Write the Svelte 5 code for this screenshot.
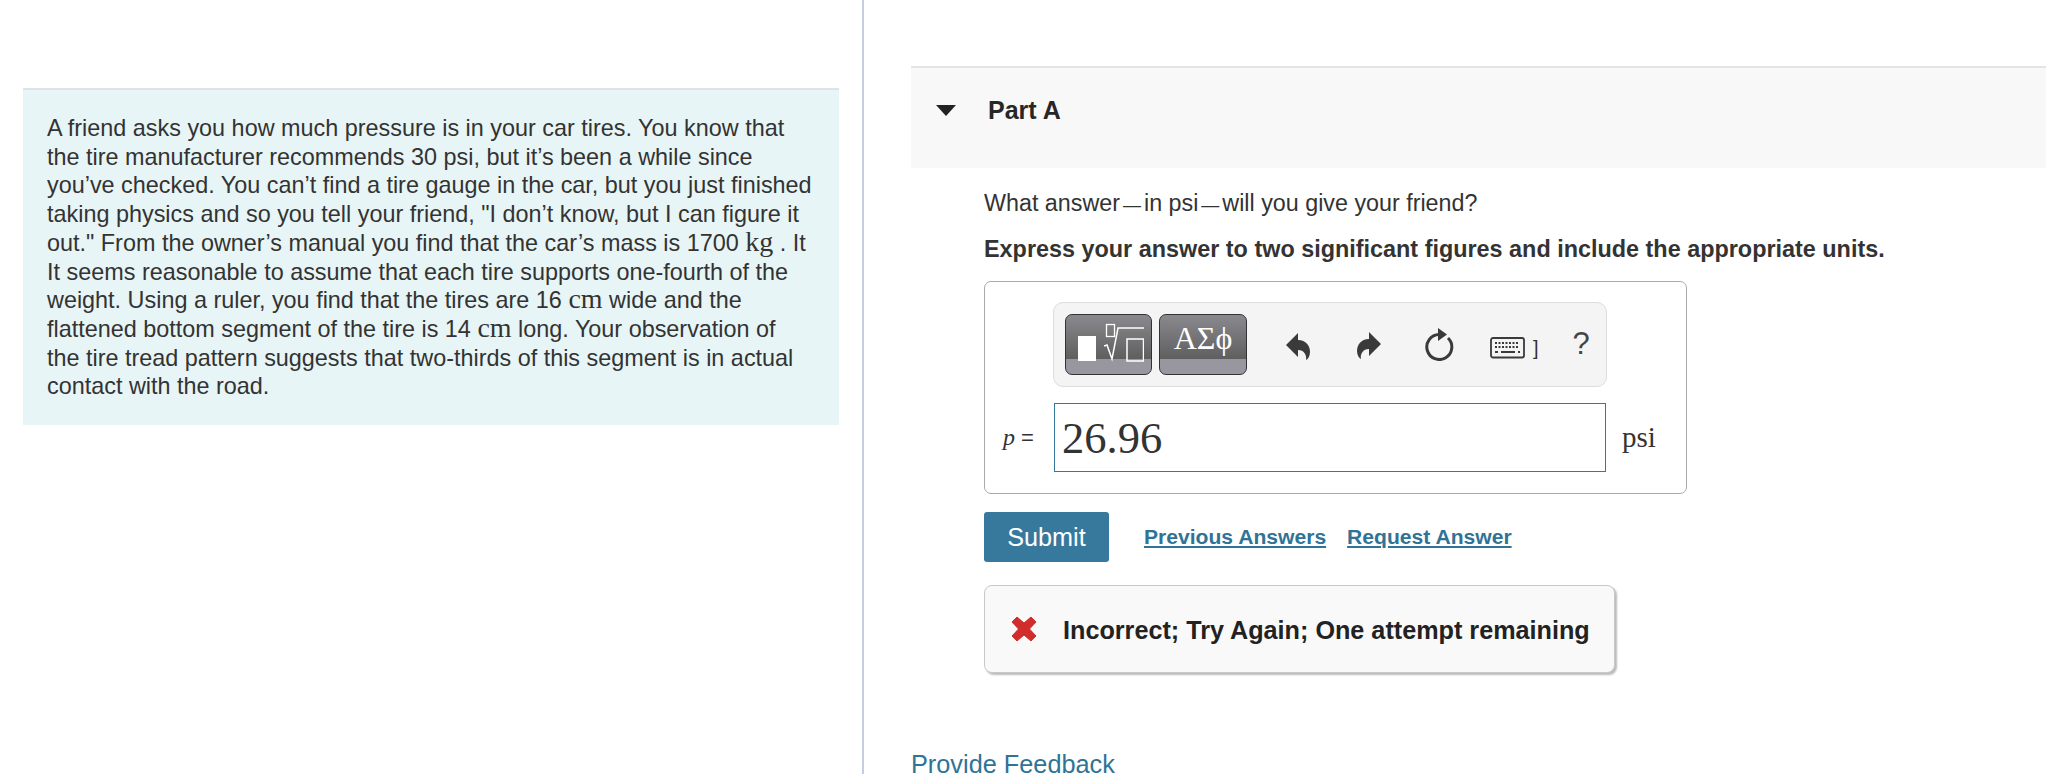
<script>
  let answer = "26.96";
</script>

<div class="page">
  <div class="left">
    <div class="intro">
      A friend asks you how much pressure is in your car tires. You know that<br />
      the tire manufacturer recommends 30 psi, but it’s been a while since<br />
      you’ve checked. You can’t find a tire gauge in the car, but you just finished<br />
      taking physics and so you tell your friend, "I don’t know, but I can figure it<br />
      out." From the owner’s manual you find that the car’s mass is 1700 <span class="unit">kg</span> . It<br />
      It seems reasonable to assume that each tire supports one-fourth of the<br />
      weight. Using a ruler, you find that the tires are 16 <span class="unit">cm</span> wide and the<br />
      flattened bottom segment of the tire is 14 <span class="unit">cm</span> long. Your observation of<br />
      the tire tread pattern suggests that two-thirds of this segment is in actual<br />
      contact with the road.
    </div>
  </div>

  <div class="right">
    <div class="part-head">
      <span class="caret"></span>
      <span class="part-title">Part A</span>
    </div>

    <div class="part-body">
      <p class="question">What answer<span class="dash">—</span>in psi<span class="dash">—</span>will you give your friend?</p>
      <p class="instructions">Express your answer to two significant figures and include the appropriate units.</p>

      <div class="answer-box">
        <div class="toolbar">
          <div class="tpl templates">
            <span class="block"></span>
            <svg width="40" height="39" viewBox="0 0 40 39" fill="none" stroke="#fff">
              <rect x="2.500" y="1.500" width="8" height="12" stroke-width="1.300" />
              <path d="M0 23l3-1 5 14 6-31h26" stroke-width="1.500" />
              <rect x="23" y="16" width="16.500" height="22" stroke-width="1.500" />
            </svg>
          </div>
          <div class="tpl symbols">ΑΣϕ</div>

          <svg class="undo" width="24" height="27" viewBox="0 0 24 27">
            <path d="M0 12L12 0v7c8 0 12 6 12 12 0 4-2 7-4 8 1-5-2-10-8-10v7z" fill="#3a3a3a" />
          </svg>
          <svg class="redo" width="24" height="27" viewBox="0 0 24 27">
            <path d="M24 12L12 0v7C4 7 0 13 0 19c0 4 2 7 4 8-1-5 2-10 8-10v7z" fill="#3a3a3a" />
          </svg>
          <svg class="reset" width="30" height="34" viewBox="0 0 30 34">
            <path d="M15 7.500A12.500 12.500 0 1 0 24 11" fill="none" stroke="#3a3a3a" stroke-width="3" />
            <path d="M14 1l9 6.500-9 6.500z" fill="#3a3a3a" />
          </svg>
          <svg class="keys" width="36" height="22" viewBox="0 0 36 22">
            <rect x="1" y="1" width="33" height="19.500" rx="2" fill="none" stroke="#3a3a3a" stroke-width="1.800" />
            <path d="M5 6h24M5 10h24" stroke="#3a3a3a" stroke-width="2" stroke-dasharray="2 1.500" />
            <path d="M5 15h3M11 15h14M28 15h2" stroke="#3a3a3a" stroke-width="2" />
          </svg>
          <span class="bracket">]</span>
          <span class="help">?</span>
        </div>

        <div class="input-row">
          <span class="label"><i>p</i> <span class="eq">=</span></span>
          <input class="value" value={answer} />
          <span class="units">psi</span>
        </div>
      </div>

      <div class="actions">
        <button class="submit">Submit</button>
        <a href="#prev">Previous Answers</a>
        <a href="#req">Request Answer</a>
      </div>

      <div class="feedback">
        <svg width="26" height="26" viewBox="0 0 26 26">
          <path d="M6 1l7 6 7-6 5 5-6.500 7 6.500 7-5 5-7-6-7 6-5-5 6.500-7L1 6z" fill="#d22d2d" stroke="#d22d2d" stroke-linejoin="round" />
        </svg>
        <span>Incorrect; Try Again; One attempt remaining</span>
      </div>
    </div>

    <a class="provide" href="#feedback">Provide Feedback</a>
  </div>
</div>

<style>
  :global(body) {
    margin: 0;
    background: #fff;
  }
  .page {
    display: flex;
    height: 774px;
    overflow: hidden;
    font-family: "Liberation Sans", Arial, sans-serif;
    color: #333;
  }
  .left {
    box-sizing: border-box;
    width: 864px;
    flex: none;
    padding: 88px 23px 0 23px;
    border-right: 2px solid #c3cfdf;
  }
  .intro {
    border-top: 2px solid #dde3e6;
    background: #e8f5f6;
    padding: 24px 24px 24px 24px;
    font-size: 23.400px;
    line-height: 28.700px;
    white-space: nowrap;
  }
  .unit {
    font-family: "Liberation Serif", serif;
    font-size: 28px;
    line-height: 0;
  }
  .right {
    flex: 1;
    padding: 66px 0 0 47px;
    min-width: 0;
  }
  .part-head {
    box-sizing: border-box;
    height: 102px;
    border-top: 2px solid #e2e4e6;
    background: #f8f8f8;
    display: flex;
    padding: 28px 0 0 25px;
    gap: 32px;
  }
  .caret {
    margin-top: 9px;
    width: 0;
    height: 0;
    border-left: 10px solid transparent;
    border-right: 10px solid transparent;
    border-top: 11px solid #222;
  }
  .part-title {
    font-size: 25px;
    font-weight: bold;
    line-height: 28px;
    color: #272727;
  }
  .part-body {
    padding: 0 0 0 73px;
  }
  .question {
    margin: 21px 0 0 0;
    font-size: 23.300px;
    line-height: 28px;
  }
  .dash {
    font-size: 18px;
    line-height: 0;
    margin: 0 3px;
  }
  .instructions {
    margin: 18px 0 0 0;
    font-size: 23.400px;
    line-height: 28px;
    font-weight: bold;
  }
  .answer-box {
    box-sizing: border-box;
    width: 703px;
    height: 213px;
    margin-top: 18px;
    border: 1px solid #aaa;
    border-radius: 7px;
    padding: 20px 0 0 68px;
  }
  .toolbar {
    box-sizing: border-box;
    width: 554px;
    height: 85px;
    background: #f4f4f4;
    border: 1px solid #ddd;
    border-radius: 10px;
    display: flex;
    align-items: center;
    padding: 0 0 0 11px;
  }
  .tpl {
    box-sizing: border-box;
    height: 61px;
    margin-top: -1px;
    border: 1px solid #333;
    border-radius: 7px;
    background: linear-gradient(#8a898e 0, #5f5f60 74%, #98969e 75%, #98969e 100%);
    display: flex;
    align-items: flex-end;
    color: #fff;
    flex: none;
  }
  .templates {
    width: 87px;
    padding: 0 0 13px 12px;
    gap: 8px;
  }
  .block {
    width: 18px;
    height: 25px;
    background: #fff;
  }
  .templates svg {
    margin-bottom: -1px;
    flex: none;
  }
  .symbols {
    width: 88px;
    margin-left: 7px;
    justify-content: center;
    align-items: center;
    padding-bottom: 11px;
    font-family: "Liberation Serif", serif;
    font-size: 32px;
  }
  .undo {
    margin-left: 39px;
    margin-top: 4px;
  }
  .redo {
    margin-left: 47px;
    margin-top: 2px;
  }
  .reset {
    margin-left: 43px;
    margin-top: -2px;
  }
  .keys {
    margin-left: 36px;
    margin-top: 6px;
  }
  .bracket {
    margin-left: 7px;
    font-size: 20px;
    margin-top: 8px;
  }
  .help {
    margin-left: 34px;
    font-size: 31px;
    margin-top: -2px;
    color: #444;
  }
  .input-row {
    display: flex;
    align-items: center;
    margin-top: 16px;
  }
  .label {
    width: 51px;
    margin-left: -50px;
    font-family: "Liberation Serif", serif;
    font-size: 24px;
    flex: none;
  }
  .eq {
    font-family: "Liberation Sans", sans-serif;
    font-size: 22px;
  }
  .value {
    box-sizing: border-box;
    width: 552px;
    height: 69px;
    border: 1px solid #35789a;
    border-radius: 0;
    outline: none;
    padding: 0 7px;
    font-family: "Liberation Serif", serif;
    font-size: 44.500px;
    color: #333;
    flex: none;
  }
  .units {
    margin-left: 16px;
    font-family: "Liberation Serif", serif;
    font-size: 29px;
  }
  .actions {
    display: flex;
    align-items: center;
    margin-top: 18px;
  }
  .submit {
    box-sizing: border-box;
    width: 125px;
    height: 50px;
    background: #37799d;
    border: none;
    border-radius: 3px;
    color: #fff;
    font-family: inherit;
    font-size: 25.200px;
  }
  .actions a {
    color: #2f7396;
    font-size: 21.100px;
    font-weight: bold;
    margin-left: 21px;
  }
  .actions a:first-of-type {
    margin-left: 35px;
  }
  .feedback {
    box-sizing: border-box;
    width: 631px;
    height: 88px;
    margin-top: 23px;
    background: #f9f9f9;
    border: 1px solid #c8c8c8;
    border-radius: 8px;
    box-shadow: 2px 2px 2px #bbb;
    display: flex;
    align-items: center;
    padding-left: 26px;
    gap: 26px;
    font-size: 25.200px;
    font-weight: bold;
    color: #222;
  }
  .feedback span {
    margin-top: 3px;
  }
  .provide {
    display: block;
    margin-top: 82px;
    color: #2f7396;
    font-size: 25.300px;
    line-height: 18px;
    text-decoration: none;
  }
</style>
